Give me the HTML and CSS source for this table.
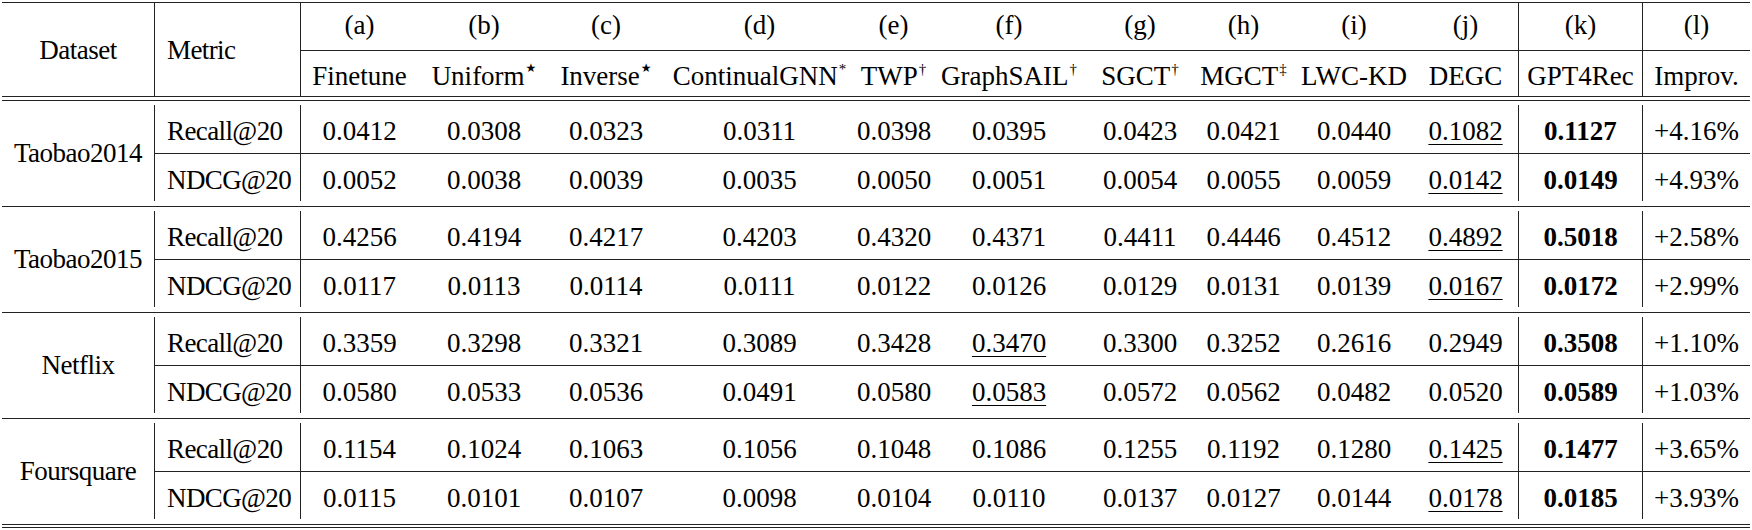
FILE: index.html
```html
<!DOCTYPE html>
<html>
<head>
<meta charset="utf-8">
<title>Results</title>
<link rel="stylesheet" href="styles.css">
</head>
<body>
<table class="results">
  <colgroup>
    <col class="c-ds"><col class="c-me"><col class="c-a"><col class="c-b"><col class="c-c"><col class="c-d"><col class="c-e"><col class="c-f"><col class="c-g"><col class="c-h"><col class="c-i"><col class="c-j"><col class="c-k"><col class="c-l">
  </colgroup>
  <thead>
    <tr class="h1">
      <th rowspan="2" class="ds vr">Dataset</th>
      <th rowspan="2" class="me vr">Metric</th>
      <th>(a)</th><th>(b)</th><th>(c)</th><th>(d)</th><th>(e)</th><th>(f)</th><th>(g)</th><th>(h)</th><th>(i)</th><th class="vr">(j)</th><th class="vr">(k)</th><th>(l)</th>
    </tr>
    <tr class="h2">
      <th>Finetune</th>
      <th>Uniform<sup class="star">★</sup></th>
      <th>Inverse<sup class="star">★</sup></th>
      <th>ContinualGNN<sup>*</sup></th>
      <th>TWP<sup>†</sup></th>
      <th>GraphSAIL<sup>†</sup></th>
      <th>SGCT<sup>†</sup></th>
      <th>MGCT<sup>‡</sup></th>
      <th>LWC-KD</th>
      <th class="vr">DEGC</th>
      <th class="vr">GPT4Rec</th>
      <th>Improv.</th>
    </tr>
    <tr class="rule-double"><td colspan="14"><div class="dbl"></div></td></tr>
  </thead>
  <tbody>
    <tr class="r1">
      <td rowspan="2" class="ds vr">Taobao2014</td>
      <td class="me vr">Recall@20</td>
      <td>0.0412</td><td>0.0308</td><td>0.0323</td><td>0.0311</td><td>0.0398</td><td>0.0395</td><td>0.0423</td><td>0.0421</td><td>0.0440</td><td class="vr"><u>0.1082</u></td><td class="vr"><b>0.1127</b></td><td>+4.16%</td>
    </tr>
    <tr class="r2">
      <td class="me vr">NDCG@20</td>
      <td>0.0052</td><td>0.0038</td><td>0.0039</td><td>0.0035</td><td>0.0050</td><td>0.0051</td><td>0.0054</td><td>0.0055</td><td>0.0059</td><td class="vr"><u>0.0142</u></td><td class="vr"><b>0.0149</b></td><td>+4.93%</td>
    </tr>
    <tr class="rule-single"><td colspan="14"><div class="sgl"></div></td></tr>
    <tr class="r1">
      <td rowspan="2" class="ds vr">Taobao2015</td>
      <td class="me vr">Recall@20</td>
      <td>0.4256</td><td>0.4194</td><td>0.4217</td><td>0.4203</td><td>0.4320</td><td>0.4371</td><td>0.4411</td><td>0.4446</td><td>0.4512</td><td class="vr"><u>0.4892</u></td><td class="vr"><b>0.5018</b></td><td>+2.58%</td>
    </tr>
    <tr class="r2">
      <td class="me vr">NDCG@20</td>
      <td>0.0117</td><td>0.0113</td><td>0.0114</td><td>0.0111</td><td>0.0122</td><td>0.0126</td><td>0.0129</td><td>0.0131</td><td>0.0139</td><td class="vr"><u>0.0167</u></td><td class="vr"><b>0.0172</b></td><td>+2.99%</td>
    </tr>
    <tr class="rule-single"><td colspan="14"><div class="sgl"></div></td></tr>
    <tr class="r1">
      <td rowspan="2" class="ds vr">Netflix</td>
      <td class="me vr">Recall@20</td>
      <td>0.3359</td><td>0.3298</td><td>0.3321</td><td>0.3089</td><td>0.3428</td><td><u>0.3470</u></td><td>0.3300</td><td>0.3252</td><td>0.2616</td><td class="vr">0.2949</td><td class="vr"><b>0.3508</b></td><td>+1.10%</td>
    </tr>
    <tr class="r2">
      <td class="me vr">NDCG@20</td>
      <td>0.0580</td><td>0.0533</td><td>0.0536</td><td>0.0491</td><td>0.0580</td><td><u>0.0583</u></td><td>0.0572</td><td>0.0562</td><td>0.0482</td><td class="vr">0.0520</td><td class="vr"><b>0.0589</b></td><td>+1.03%</td>
    </tr>
    <tr class="rule-single"><td colspan="14"><div class="sgl"></div></td></tr>
    <tr class="r1">
      <td rowspan="2" class="ds vr">Foursquare</td>
      <td class="me vr">Recall@20</td>
      <td>0.1154</td><td>0.1024</td><td>0.1063</td><td>0.1056</td><td>0.1048</td><td>0.1086</td><td>0.1255</td><td>0.1192</td><td>0.1280</td><td class="vr"><u>0.1425</u></td><td class="vr"><b>0.1477</b></td><td>+3.65%</td>
    </tr>
    <tr class="r2">
      <td class="me vr">NDCG@20</td>
      <td>0.0115</td><td>0.0101</td><td>0.0107</td><td>0.0098</td><td>0.0104</td><td>0.0110</td><td>0.0137</td><td>0.0127</td><td>0.0144</td><td class="vr"><u>0.0178</u></td><td class="vr"><b>0.0185</b></td><td>+3.93%</td>
    </tr>
    <tr class="rule-bottom"><td colspan="14"><div class="dbl-bottom"></div></td></tr>
  </tbody>
</table>
</body>
</html>
```
FILE: styles.css
```css
html, body {
  margin: 0;
  padding: 0;
  background: #ffffff;
}

body {
  padding: 2px 0 0 2px;
  font-family: "Liberation Serif", serif;
  color: #000000;
}

.results {
  table-layout: fixed;
  width: 1748px;
  border-collapse: separate;
  border-spacing: 0;
  border-top: 1px solid #222222;
  font-family: "Liberation Serif", serif;
  font-size: 27px;
  line-height: 30px;
  color: #000000;
}

.c-ds { width: 153px; }
.c-me { width: 146px; }
.c-a { width: 117px; }
.c-b { width: 132px; }
.c-c { width: 112px; }
.c-d { width: 195px; }
.c-e { width: 73px; }
.c-f { width: 158px; }
.c-g { width: 104px; }
.c-h { width: 103px; }
.c-i { width: 118px; }
.c-j { width: 106px; }
.c-k { width: 124px; }
.c-l { width: 107px; }

.results th,
.results td {
  padding: 0;
  font-weight: normal;
  text-align: center;
  vertical-align: middle;
  white-space: nowrap;
}

.results .vr {
  border-right: 1px solid #222222;
}

.results .me {
  text-align: left;
  padding-left: 12px;
  letter-spacing: -0.6px;
}

.results .ds {
  letter-spacing: -0.5px;
}

/* header rows */
.h1 th {
  height: 47px;
}
.h1 th:not([rowspan]) {
  height: 43px;
  padding-bottom: 4px;
  border-bottom: 1px solid #222222;
}
.h2 th {
  height: 41px;
  padding-top: 4px;
}

sup {
  font-size: 15px;
  line-height: 0;
  vertical-align: 0;
  position: relative;
  top: -11px;
  margin-left: 1px;
}
sup.star {
  font-family: "DejaVu Sans", sans-serif;
  font-size: 12px;
  top: -13px;
}

/* rules */
.rule-double td,
.rule-single td,
.rule-bottom td {
  padding: 0;
  height: auto;
  line-height: 0;
  font-size: 0;
}
.dbl {
  height: 3px;
  border-top: 1px solid #222222;
  border-bottom: 1px solid #222222;
  margin-bottom: 4px;
}
.sgl {
  margin: 5px 0 4px;
  border-top: 1px solid #222222;
}
.dbl-bottom {
  margin-top: 5px;
  height: 2px;
  border-top: 1px solid #222222;
  border-bottom: 1px solid #222222;
}

/* data rows */
.r1 td {
  height: 44px;
  padding-top: 4px;
}
.r1 td:not(.ds) {
  border-bottom: 1px solid #222222;
}
.r2 td {
  height: 43px;
  padding-top: 4px;
}
.results td.ds {
  padding-top: 0;
  height: auto;
}

.results td u {
  text-decoration: underline;
  text-decoration-thickness: 1px;
  text-underline-offset: 4px;
}
.results td b {
  font-weight: bold;
}
```
